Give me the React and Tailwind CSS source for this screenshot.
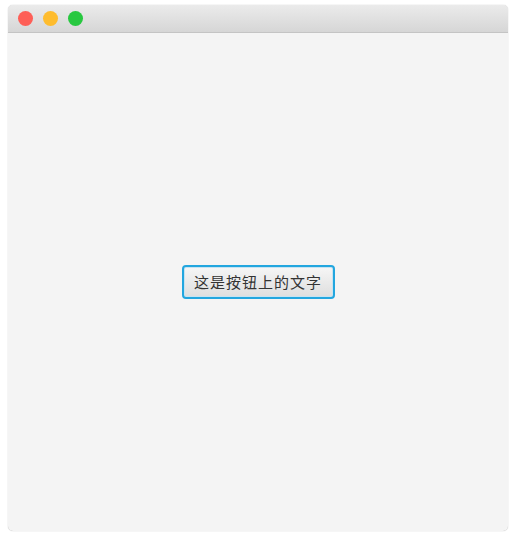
export default function App() {
  return (
    <div className="w-[520px] h-[534px] bg-white pt-[5px] pl-[8px]">
      <div className="w-[500px] h-[526px] flex flex-col rounded-[5px] overflow-hidden bg-[#f4f4f4] shadow-[0_0_1px_rgba(0,0,0,0.35)]">
        <div className="h-[28px] flex items-center gap-[10px] pl-[10px] bg-gradient-to-b from-[#ebebeb] to-[#d6d6d6] border-b border-[#c4c4c4]">
          <span className="w-[15px] h-[15px] rounded-full bg-[#fe5f57]" />
          <span className="w-[15px] h-[15px] rounded-full bg-[#febc2e]" />
          <span className="w-[15px] h-[15px] rounded-full bg-[#28c840]" />
        </div>
        <div className="flex-1 flex items-center justify-center">
          <button
            type="button"
            className="h-[34px] w-[153px] rounded-[4px] border-2 border-[#22a6df] bg-gradient-to-b from-[#f6f6f6] to-[#dedede] shadow-[inset_0_0_0_1px_#c6e3f1] text-[15px] text-[#333] tracking-[1px] flex items-center justify-center"
            style={{ fontFamily: '"Noto Sans CJK SC", "Noto Sans", sans-serif' }}
          >
            这是按钮上的文字
          </button>
        </div>
      </div>
    </div>
  )
}
